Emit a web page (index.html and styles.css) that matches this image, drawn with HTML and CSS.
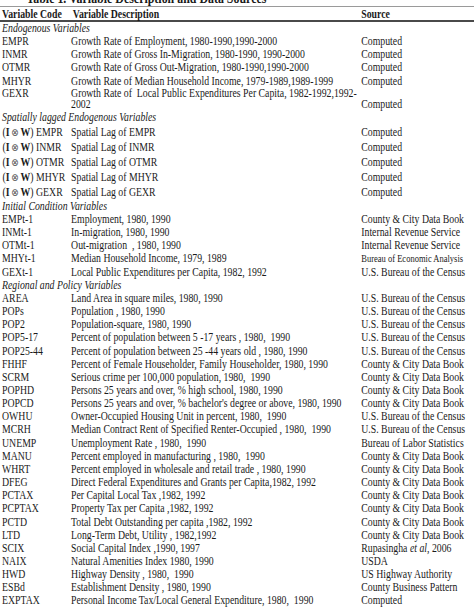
FILE: index.html
```html
<!DOCTYPE html>
<html>
<head>
<meta charset="utf-8">
<link rel="stylesheet" href="styles.css">
</head>
<body>
<div class="frame">
<div class="page">
  <div class="title">Table 1. Variable Description and Data Sources</div>
  <div class="row head">
    <div class="c1">Variable Code</div><div class="c2">Variable Description</div><div class="c3">Source</div>
  </div>
  <div class="row sec"><div class="full">Endogenous Variables</div></div>
  <div class="row"><div class="c1">EMPR</div><div class="c2">Growth Rate of Employment, 1980-1990,1990-2000</div><div class="c3">Computed</div></div>
  <div class="row"><div class="c1">INMR</div><div class="c2">Growth Rate of Gross In-Migration, 1980-1990, 1990-2000</div><div class="c3">Computed</div></div>
  <div class="row"><div class="c1">OTMR</div><div class="c2">Growth Rate of Gross Out-Migration, 1980-1990,1990-2000</div><div class="c3">Computed</div></div>
  <div class="row"><div class="c1">MHYR</div><div class="c2">Growth Rate of Median Household Income, 1979-1989,1989-1999</div><div class="c3">Computed</div></div>
  <div class="row wrap"><div class="c1">GEXR</div><div class="c2">Growth Rate of&nbsp; Local Public Expenditures Per Capita, 1982-1992,1992-<br>2002</div><div class="c3 bottom">Computed</div></div>
  <div class="row sec sp-sec"><div class="full">Spatially lagged Endogenous Variables</div></div>
  <div class="row sp"><div class="c1">(<b>I</b><span class="ot">⊗</span><b>W</b>) EMPR</div><div class="c2">Spatial Lag of EMPR</div><div class="c3">Computed</div></div>
  <div class="row sp"><div class="c1">(<b>I</b><span class="ot">⊗</span><b>W</b>) INMR</div><div class="c2">Spatial Lag of INMR</div><div class="c3">Computed</div></div>
  <div class="row sp"><div class="c1">(<b>I</b><span class="ot">⊗</span><b>W</b>) OTMR</div><div class="c2">Spatial Lag of OTMR</div><div class="c3">Computed</div></div>
  <div class="row sp"><div class="c1">(<b>I</b><span class="ot">⊗</span><b>W</b>) MHYR</div><div class="c2">Spatial Lag of MHYR</div><div class="c3">Computed</div></div>
  <div class="row sp"><div class="c1">(<b>I</b><span class="ot">⊗</span><b>W</b>) GEXR</div><div class="c2">Spatial Lag of GEXR</div><div class="c3">Computed</div></div>
  <div class="row sec"><div class="full">Initial Condition Variables</div></div>
  <div class="row"><div class="c1">EMPt-1</div><div class="c2">Employment, 1980, 1990</div><div class="c3">County &amp; City Data Book</div></div>
  <div class="row"><div class="c1">INMt-1</div><div class="c2">In-migration, 1980, 1990</div><div class="c3">Internal Revenue Service</div></div>
  <div class="row"><div class="c1">OTMt-1</div><div class="c2">Out-migration&nbsp; , 1980, 1990</div><div class="c3">Internal Revenue Service</div></div>
  <div class="row"><div class="c1">MHYt-1</div><div class="c2">Median Household Income, 1979, 1989</div><div class="c3 small">Bureau of Economic Analysis</div></div>
  <div class="row"><div class="c1">GEXt-1</div><div class="c2">Local Public Expenditures per Capita, 1982, 1992</div><div class="c3">U.S. Bureau of the Census</div></div>
  <div class="row sec"><div class="full">Regional and Policy Variables</div></div>
  <div class="row"><div class="c1">AREA</div><div class="c2">Land Area in square miles, 1980, 1990</div><div class="c3">U.S. Bureau of the Census</div></div>
  <div class="row"><div class="c1">POPs</div><div class="c2">Population , 1980, 1990</div><div class="c3">U.S. Bureau of the Census</div></div>
  <div class="row"><div class="c1">POP2</div><div class="c2">Population-square, 1980, 1990</div><div class="c3">U.S. Bureau of the Census</div></div>
  <div class="row"><div class="c1">POP5-17</div><div class="c2">Percent of population between 5 -17 years , 1980,&nbsp; 1990</div><div class="c3">U.S. Bureau of the Census</div></div>
  <div class="row"><div class="c1">POP25-44</div><div class="c2">Percent of population between 25 -44 years old , 1980, 1990</div><div class="c3">U.S. Bureau of the Census</div></div>
  <div class="row"><div class="c1">FHHF</div><div class="c2">Percent of Female Householder, Family Householder, 1980, 1990</div><div class="c3">County &amp; City Data Book</div></div>
  <div class="row"><div class="c1">SCRM</div><div class="c2">Serious crime per 100,000 population, 1980,&nbsp; 1990</div><div class="c3">County &amp; City Data Book</div></div>
  <div class="row"><div class="c1">POPHD</div><div class="c2">Persons 25 years and over, % high school, 1980, 1990</div><div class="c3">County &amp; City Data Book</div></div>
  <div class="row"><div class="c1">POPCD</div><div class="c2">Persons 25 years and over, % bachelor's degree or above, 1980, 1990</div><div class="c3">County &amp; City Data Book</div></div>
  <div class="row"><div class="c1">OWHU</div><div class="c2">Owner-Occupied Housing Unit in percent, 1980,&nbsp; 1990</div><div class="c3">U.S. Bureau of the Census</div></div>
  <div class="row"><div class="c1">MCRH</div><div class="c2">Median Contract Rent of Specified Renter-Occupied , 1980,&nbsp; 1990</div><div class="c3">U.S. Bureau of the Census</div></div>
  <div class="row"><div class="c1">UNEMP</div><div class="c2">Unemployment Rate , 1980,&nbsp; 1990</div><div class="c3">Bureau of Labor Statistics</div></div>
  <div class="row"><div class="c1">MANU</div><div class="c2">Percent employed in manufacturing , 1980,&nbsp; 1990</div><div class="c3">County &amp; City Data Book</div></div>
  <div class="row"><div class="c1">WHRT</div><div class="c2">Percent employed in wholesale and retail trade , 1980, 1990</div><div class="c3">County &amp; City Data Book</div></div>
  <div class="row"><div class="c1">DFEG</div><div class="c2">Direct Federal Expenditures and Grants per Capita,1982, 1992</div><div class="c3">County &amp; City Data Book</div></div>
  <div class="row"><div class="c1">PCTAX</div><div class="c2">Per Capital Local Tax ,1982, 1992</div><div class="c3">County &amp; City Data Book</div></div>
  <div class="row"><div class="c1">PCPTAX</div><div class="c2">Property Tax per Capita ,1982, 1992</div><div class="c3">County &amp; City Data Book</div></div>
  <div class="row"><div class="c1">PCTD</div><div class="c2">Total Debt Outstanding per capita ,1982, 1992</div><div class="c3">County &amp; City Data Book</div></div>
  <div class="row"><div class="c1">LTD</div><div class="c2">Long-Term Debt, Utility , 1982,1992</div><div class="c3">County &amp; City Data Book</div></div>
  <div class="row"><div class="c1">SCIX</div><div class="c2">Social Capital Index ,1990, 1997</div><div class="c3">Rupasingha <i>et al</i>, 2006</div></div>
  <div class="row"><div class="c1">NAIX</div><div class="c2">Natural Amenities Index 1980, 1990</div><div class="c3">USDA</div></div>
  <div class="row"><div class="c1">HWD</div><div class="c2">Highway Density , 1980,&nbsp; 1990</div><div class="c3">US Highway Authority</div></div>
  <div class="row"><div class="c1">ESBd</div><div class="c2">Establishment Density , 1980, 1990</div><div class="c3">County Business Pattern</div></div>
  <div class="row"><div class="c1">EXPTAX</div><div class="c2">Personal Income Tax/Local General Expenditure, 1980,&nbsp; 1990</div><div class="c3">Computed</div></div>
</div>
</div>
</body>
</html>
```
FILE: styles.css
```css
html, body {
  margin: 0;
  padding: 0;
  background: #ffffff;
  overflow: hidden;
}
.frame {
  width: 474px;
  height: 607px;
  overflow: hidden;
}
/* the scanned table is horizontally condensed: lay it out wide, then condense */
.page {
  width: 557px;
  transform: scaleX(0.851);
  transform-origin: 0 0;
  font-family: "Liberation Serif", "Times New Roman", serif;
  font-size: 11.5px;
  color: #1a1a1a;
}
.title {
  margin-top: -8px;
  height: 14px;
  line-height: 14px;
  font-size: 14px;
  font-weight: bold;
  padding-left: 31px;
  border-bottom: 1px solid #9a9a9a;
  white-space: nowrap;
}
.row {
  display: grid;
  grid-template-columns: 83.5px 341px 1fr;
  height: 13.17px;
  line-height: 13.17px;
  white-space: nowrap;
}
.c1 { padding-left: 2.4px; }
.head {
  height: 12px;
  padding-top: 1px;
  line-height: 12px;
  font-weight: bold;
  border-bottom: 2px solid #4a4a4a;
}
.head .c2 { padding-left: 2px; }
.sec .full {
  grid-column: 1 / 4;
  font-style: italic;
  padding-left: 2.4px;
}
.wrap {
  height: 23px;
  line-height: 11.5px;
}
.wrap .c2 { white-space: normal; }
.bottom { align-self: end; }
.sp-sec { height: 14px; }
.sp { height: 15px; line-height: 15px; }
.sp .c1 { padding-left: 3px; }
.ot {
  font-family: "DejaVu Sans", sans-serif;
  font-size: 10.5px;
  color: #555;
  padding: 0 2px;
}
.small { font-size: 10px; }
```
